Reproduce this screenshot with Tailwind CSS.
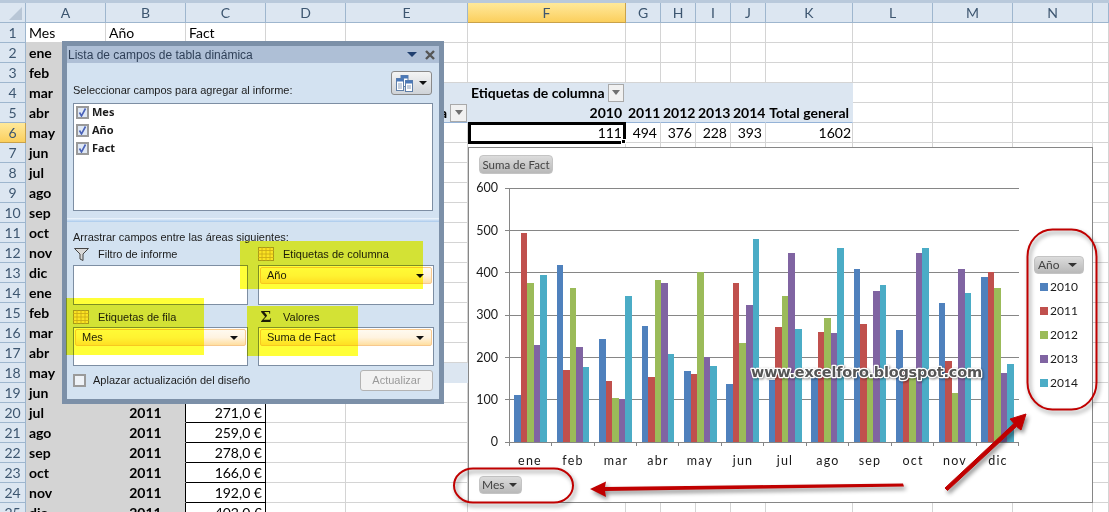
<!DOCTYPE html>
<html>
<head>
<meta charset="utf-8">
<script src="https://cdn.jsdelivr.net/npm/@tailwindcss/browser@4"></script>
</head>
<body class="bg-white">
<div class="relative w-[1109px] h-[512px] overflow-hidden bg-white font-['Lato',sans-serif] text-[14px] text-black">

<!-- Sheet -->
<div class="pt-[3px] bg-[#b9c9db] grid grid-cols-[26px_80px_80px_80px_80px_122px_158px_35px_35px_35px_35px_87px_80px_80px_80px_16px] grid-rows-[20px] auto-rows-[20px] [&>div]:border-r [&>div]:border-b [&>div]:border-[#d4d4d4] [&>div]:bg-white [&>div]:px-[3px] [&>div]:leading-[19px] [&>div]:whitespace-nowrap">
  <!-- header -->
  <div class="bg-[#dce6f1]! border-[#9eb6ce]! relative"><svg class="absolute left-[9px] top-[4px]" width="13" height="13" viewBox="0 0 13 13"><path d="M13 0V13H0Z" fill="#b8c6d6"/></svg></div>
  <div class="bg-[#dce6f1]! border-[#9eb6ce]! text-center text-[#3d5670]">A</div>
  <div class="bg-[#dce6f1]! border-[#9eb6ce]! text-center text-[#3d5670]">B</div>
  <div class="bg-[#dce6f1]! border-[#9eb6ce]! text-center text-[#3d5670]">C</div>
  <div class="bg-[#dce6f1]! border-[#9eb6ce]! text-center text-[#3d5670]">D</div>
  <div class="bg-[#dce6f1]! border-[#9eb6ce]! text-center text-[#3d5670]">E</div>
  <div class="bg-linear-to-b! from-[#ffe99a] to-[#fbcf5c] border-[#c9a24a]! text-center text-[#3d5670]">F</div>
  <div class="bg-[#dce6f1]! border-[#9eb6ce]! text-center text-[#3d5670]">G</div>
  <div class="bg-[#dce6f1]! border-[#9eb6ce]! text-center text-[#3d5670]">H</div>
  <div class="bg-[#dce6f1]! border-[#9eb6ce]! text-center text-[#3d5670]">I</div>
  <div class="bg-[#dce6f1]! border-[#9eb6ce]! text-center text-[#3d5670]">J</div>
  <div class="bg-[#dce6f1]! border-[#9eb6ce]! text-center text-[#3d5670]">K</div>
  <div class="bg-[#dce6f1]! border-[#9eb6ce]! text-center text-[#3d5670]">L</div>
  <div class="bg-[#dce6f1]! border-[#9eb6ce]! text-center text-[#3d5670]">M</div>
  <div class="bg-[#dce6f1]! border-[#9eb6ce]! text-center text-[#3d5670]">N</div>
  <div class="bg-[#dce6f1]! border-[#9eb6ce]!"></div>
  <!-- 1 -->
  <div class="bg-[#dce6f1]! border-[#9eb6ce]! text-center text-[#3d5670]">1</div><div>Mes</div><div>Año</div><div>Fact</div><div></div><div></div><div></div><div></div><div></div><div></div><div></div><div></div><div></div><div></div><div></div><div></div>
  <!-- 2 -->
  <div class="bg-[#dce6f1]! border-[#9eb6ce]! text-center text-[#3d5670]">2</div><div class="bg-[#d4d4d4]! border-[#d4d4d4]! font-bold">ene</div><div class="bg-[#d4d4d4]! border-[#d4d4d4]!"></div><div></div><div></div><div></div><div></div><div></div><div></div><div></div><div></div><div></div><div></div><div></div><div></div><div></div>
  <!-- 3 -->
  <div class="bg-[#dce6f1]! border-[#9eb6ce]! text-center text-[#3d5670]">3</div><div class="bg-[#d4d4d4]! border-[#d4d4d4]! font-bold">feb</div><div class="bg-[#d4d4d4]! border-[#d4d4d4]!"></div><div></div><div></div><div></div><div></div><div></div><div></div><div></div><div></div><div></div><div></div><div></div><div></div><div></div>
  <!-- 4 -->
  <div class="bg-[#dce6f1]! border-[#9eb6ce]! text-center text-[#3d5670]">4</div><div class="bg-[#d4d4d4]! border-[#d4d4d4]! font-bold">mar</div><div class="bg-[#d4d4d4]! border-[#d4d4d4]!"></div><div></div><div></div><div class="bg-[#dce6f1]! border-[#dce6f1]!"></div>
  <div class="bg-[#dce6f1]! border-[#dce6f1]! font-bold flex justify-between items-center pr-[1px]!"><span>Etiquetas de columna</span><span class="w-[16px] h-[18px] border border-[#a9a9a9] bg-[#f1f1f1] flex items-center justify-center"><svg width="8" height="5" viewBox="0 0 8 5"><path d="M0 0H8L4 5Z" fill="#707070"/></svg></span></div>
  <div class="bg-[#dce6f1]! border-[#dce6f1]!"></div><div class="bg-[#dce6f1]! border-[#dce6f1]!"></div><div class="bg-[#dce6f1]! border-[#dce6f1]!"></div><div class="bg-[#dce6f1]! border-[#dce6f1]!"></div><div class="bg-[#dce6f1]! border-[#dce6f1]!"></div><div></div><div></div><div></div><div></div>
  <!-- 5 -->
  <div class="bg-[#dce6f1]! border-[#9eb6ce]! text-center text-[#3d5670]">5</div><div class="bg-[#d4d4d4]! border-[#d4d4d4]! font-bold">abr</div><div class="bg-[#d4d4d4]! border-[#d4d4d4]!"></div><div></div><div></div>
  <div class="bg-[#dce6f1]! border-[#dce6f1]! border-b-[#95b3d7]! font-bold flex justify-end items-center gap-[3px] pr-0! overflow-hidden"><span>Etiquetas de fila</span><span class="shrink-0 w-[17px] h-[18px] border border-[#a9a9a9] bg-[#f1f1f1] flex items-center justify-center"><svg width="8" height="5" viewBox="0 0 8 5"><path d="M0 0H8L4 5Z" fill="#707070"/></svg></span></div>
  <div class="bg-[#dce6f1]! border-[#dce6f1]! border-b-[#95b3d7]! font-bold text-right">2010</div><div class="bg-[#dce6f1]! border-[#dce6f1]! border-b-[#95b3d7]! font-bold text-right px-[2px]!">2011</div><div class="bg-[#dce6f1]! border-[#dce6f1]! border-b-[#95b3d7]! font-bold text-right px-[2px]!">2012</div><div class="bg-[#dce6f1]! border-[#dce6f1]! border-b-[#95b3d7]! font-bold text-right px-[2px]!">2013</div><div class="bg-[#dce6f1]! border-[#dce6f1]! border-b-[#95b3d7]! font-bold text-right px-[2px]!">2014</div><div class="bg-[#dce6f1]! border-[#dce6f1]! border-b-[#95b3d7]! font-bold text-right">Total general</div><div></div><div></div><div></div><div></div>
  <!-- 6 -->
  <div class="bg-linear-to-b! from-[#ffe99a] to-[#fbcf5c] border-[#c9a24a]! text-center text-[#3d5670]">6</div><div class="bg-[#d4d4d4]! border-[#d4d4d4]! font-bold">may</div><div class="bg-[#d4d4d4]! border-[#d4d4d4]!"></div><div></div><div></div><div></div>
  <div class="relative -mt-[1px] -mb-[1px] border-[3px]! border-black! text-right leading-[16px]! pl-0! pr-[1px]!">111<span class="absolute -right-[3px] -bottom-[3px] w-[5px] h-[5px] bg-black border border-white"></span></div>
  <div class="text-right">494</div><div class="text-right">376</div><div class="text-right">228</div><div class="text-right">393</div><div class="text-right px-[1px]!">1602</div><div></div><div></div><div></div><div></div>
  <!-- 7 -->
  <div class="bg-[#dce6f1]! border-[#9eb6ce]! text-center text-[#3d5670]">7</div><div class="bg-[#d4d4d4]! border-[#d4d4d4]! font-bold">jun</div><div class="bg-[#d4d4d4]! border-[#d4d4d4]!"></div><div></div><div></div><div></div><div></div><div></div><div></div><div></div><div></div><div></div><div></div><div></div><div></div><div></div>
  <!-- 8 -->
  <div class="bg-[#dce6f1]! border-[#9eb6ce]! text-center text-[#3d5670]">8</div><div class="bg-[#d4d4d4]! border-[#d4d4d4]! font-bold">jul</div><div class="bg-[#d4d4d4]! border-[#d4d4d4]!"></div><div></div><div></div><div></div><div></div><div></div><div></div><div></div><div></div><div></div><div></div><div></div><div></div><div></div>
  <!-- 9 -->
  <div class="bg-[#dce6f1]! border-[#9eb6ce]! text-center text-[#3d5670]">9</div><div class="bg-[#d4d4d4]! border-[#d4d4d4]! font-bold">ago</div><div class="bg-[#d4d4d4]! border-[#d4d4d4]!"></div><div></div><div></div><div></div><div></div><div></div><div></div><div></div><div></div><div></div><div></div><div></div><div></div><div></div>
  <!-- 10 -->
  <div class="bg-[#dce6f1]! border-[#9eb6ce]! text-center text-[#3d5670]">10</div><div class="bg-[#d4d4d4]! border-[#d4d4d4]! font-bold">sep</div><div class="bg-[#d4d4d4]! border-[#d4d4d4]!"></div><div></div><div></div><div></div><div></div><div></div><div></div><div></div><div></div><div></div><div></div><div></div><div></div><div></div>
  <!-- 11 -->
  <div class="bg-[#dce6f1]! border-[#9eb6ce]! text-center text-[#3d5670]">11</div><div class="bg-[#d4d4d4]! border-[#d4d4d4]! font-bold">oct</div><div class="bg-[#d4d4d4]! border-[#d4d4d4]!"></div><div></div><div></div><div></div><div></div><div></div><div></div><div></div><div></div><div></div><div></div><div></div><div></div><div></div>
  <!-- 12 -->
  <div class="bg-[#dce6f1]! border-[#9eb6ce]! text-center text-[#3d5670]">12</div><div class="bg-[#d4d4d4]! border-[#d4d4d4]! font-bold">nov</div><div class="bg-[#d4d4d4]! border-[#d4d4d4]!"></div><div></div><div></div><div></div><div></div><div></div><div></div><div></div><div></div><div></div><div></div><div></div><div></div><div></div>
  <!-- 13 -->
  <div class="bg-[#dce6f1]! border-[#9eb6ce]! text-center text-[#3d5670]">13</div><div class="bg-[#d4d4d4]! border-[#d4d4d4]! font-bold">dic</div><div class="bg-[#d4d4d4]! border-[#d4d4d4]!"></div><div></div><div></div><div></div><div></div><div></div><div></div><div></div><div></div><div></div><div></div><div></div><div></div><div></div>
  <!-- 14 -->
  <div class="bg-[#dce6f1]! border-[#9eb6ce]! text-center text-[#3d5670]">14</div><div class="bg-[#d4d4d4]! border-[#d4d4d4]! font-bold">ene</div><div class="bg-[#d4d4d4]! border-[#d4d4d4]!"></div><div></div><div></div><div></div><div></div><div></div><div></div><div></div><div></div><div></div><div></div><div></div><div></div><div></div>
  <!-- 15 -->
  <div class="bg-[#dce6f1]! border-[#9eb6ce]! text-center text-[#3d5670]">15</div><div class="bg-[#d4d4d4]! border-[#d4d4d4]! font-bold">feb</div><div class="bg-[#d4d4d4]! border-[#d4d4d4]!"></div><div></div><div></div><div></div><div></div><div></div><div></div><div></div><div></div><div></div><div></div><div></div><div></div><div></div>
  <!-- 16 -->
  <div class="bg-[#dce6f1]! border-[#9eb6ce]! text-center text-[#3d5670]">16</div><div class="bg-[#d4d4d4]! border-[#d4d4d4]! font-bold">mar</div><div class="bg-[#d4d4d4]! border-[#d4d4d4]!"></div><div></div><div></div><div></div><div></div><div></div><div></div><div></div><div></div><div></div><div></div><div></div><div></div><div></div>
  <!-- 17 -->
  <div class="bg-[#dce6f1]! border-[#9eb6ce]! text-center text-[#3d5670]">17</div><div class="bg-[#d4d4d4]! border-[#d4d4d4]! font-bold">abr</div><div class="bg-[#d4d4d4]! border-[#d4d4d4]!"></div><div></div><div></div><div></div><div></div><div></div><div></div><div></div><div></div><div></div><div></div><div></div><div></div><div></div>
  <!-- 18 -->
  <div class="bg-[#dce6f1]! border-[#9eb6ce]! text-center text-[#3d5670]">18</div><div class="bg-[#d4d4d4]! border-[#d4d4d4]! font-bold">may</div><div class="bg-[#d4d4d4]! border-[#d4d4d4]!"></div><div></div><div></div><div class="bg-[#dce6f1]! border-[#dce6f1]!"></div><div></div><div></div><div></div><div></div><div></div><div></div><div></div><div></div><div></div><div></div>
  <!-- 19 -->
  <div class="bg-[#dce6f1]! border-[#9eb6ce]! text-center text-[#3d5670]">19</div><div class="bg-[#d4d4d4]! border-[#d4d4d4]! font-bold">jun</div><div class="bg-[#d4d4d4]! border-[#d4d4d4]!"></div><div></div><div></div><div></div><div></div><div></div><div></div><div></div><div></div><div></div><div></div><div></div><div></div><div></div>
  <!-- 20 -->
  <div class="bg-[#dce6f1]! border-[#9eb6ce]! text-center text-[#3d5670]">20</div><div class="bg-[#d4d4d4]! border-[#d4d4d4]! font-bold">jul</div><div class="bg-[#d4d4d4]! border-[#d4d4d4]! border-r-black! font-bold text-center">2011</div><div class="border-black! text-right">271,0 €</div><div></div><div></div><div></div><div></div><div></div><div></div><div></div><div></div><div></div><div></div><div></div><div></div>
  <!-- 21 -->
  <div class="bg-[#dce6f1]! border-[#9eb6ce]! text-center text-[#3d5670]">21</div><div class="bg-[#d4d4d4]! border-[#d4d4d4]! font-bold">ago</div><div class="bg-[#d4d4d4]! border-[#d4d4d4]! border-r-black! font-bold text-center">2011</div><div class="border-black! text-right">259,0 €</div><div></div><div></div><div></div><div></div><div></div><div></div><div></div><div></div><div></div><div></div><div></div><div></div>
  <!-- 22 -->
  <div class="bg-[#dce6f1]! border-[#9eb6ce]! text-center text-[#3d5670]">22</div><div class="bg-[#d4d4d4]! border-[#d4d4d4]! font-bold">sep</div><div class="bg-[#d4d4d4]! border-[#d4d4d4]! border-r-black! font-bold text-center">2011</div><div class="border-black! text-right">278,0 €</div><div></div><div></div><div></div><div></div><div></div><div></div><div></div><div></div><div></div><div></div><div></div><div></div>
  <!-- 23 -->
  <div class="bg-[#dce6f1]! border-[#9eb6ce]! text-center text-[#3d5670]">23</div><div class="bg-[#d4d4d4]! border-[#d4d4d4]! font-bold">oct</div><div class="bg-[#d4d4d4]! border-[#d4d4d4]! border-r-black! font-bold text-center">2011</div><div class="border-black! text-right">166,0 €</div><div></div><div></div><div></div><div></div><div></div><div></div><div></div><div></div><div></div><div></div><div></div><div></div>
  <!-- 24 -->
  <div class="bg-[#dce6f1]! border-[#9eb6ce]! text-center text-[#3d5670]">24</div><div class="bg-[#d4d4d4]! border-[#d4d4d4]! font-bold">nov</div><div class="bg-[#d4d4d4]! border-[#d4d4d4]! border-r-black! font-bold text-center">2011</div><div class="border-black! text-right">192,0 €</div><div></div><div></div><div></div><div></div><div></div><div></div><div></div><div></div><div></div><div></div><div></div><div></div>
  <!-- 25 -->
  <div class="bg-[#dce6f1]! border-[#9eb6ce]! text-center text-[#3d5670]">25</div><div class="bg-[#d4d4d4]! border-[#d4d4d4]! font-bold">dic</div><div class="bg-[#d4d4d4]! border-[#d4d4d4]! border-r-black! font-bold text-center">2011</div><div class="border-black! text-right">402,0 €</div><div></div><div></div><div></div><div></div><div></div><div></div><div></div><div></div><div></div><div></div><div></div><div></div>
</div>

<!-- Pivot field list panel -->
<div class="absolute left-[62px] top-[41px] w-[382px] h-[363px] border-[5px] border-[#7c90a8] bg-[#d3e2f1] flex flex-col font-['Liberation_Sans',sans-serif] text-[11px] text-[#1c1c1c]">
  <div class="h-[17px] shrink-0 bg-[#aebfd6] flex items-center justify-between pl-[1px] pr-[4px] text-[#2f4058] text-[12px]">
    <span>Lista de campos de tabla dinámica</span>
    <span class="flex items-center gap-[8px]">
      <svg width="10" height="5" viewBox="0 0 10 5"><path d="M0 0H10L5 5Z" fill="#1f3f6f"/></svg>
      <svg width="10" height="10" viewBox="0 0 10 10"><path d="M1 1L9 9M9 1L1 9" stroke="#555" stroke-width="2.4"/></svg>
    </span>
  </div>
  <div class="flex-1 px-[6px] flex flex-col">
    <div class="h-[40px] shrink-0 flex justify-between">
      <span class="mt-[19px] leading-[16px]">Seleccionar campos para agregar al informe:</span>
      <div class="mt-[8px] mr-[1px] w-[41px] h-[24px] rounded-[3px] border border-[#8a8a8a] bg-linear-to-b from-[#f4f4f4] to-[#cfd3d8] flex items-center justify-center gap-[6px]">
        <svg width="17" height="17" viewBox="0 0 17 17"><rect x="5" y="0.5" width="7" height="11" fill="#fff" stroke="#5f7fa8"/><rect x="5" y="0.5" width="7" height="3" fill="#4a78b8"/><rect x="0.5" y="3.5" width="7" height="12" fill="#fff" stroke="#5f7fa8"/><rect x="0.5" y="3.5" width="7" height="3" fill="#4a78b8"/><rect x="9.5" y="5.5" width="7" height="11" fill="#fff" stroke="#5f7fa8"/><rect x="9.5" y="5.5" width="7" height="3" fill="#4a78b8"/><path d="M2 9H6M2 11H6M2 13H6M11 11H15M11 13H15" stroke="#8aa0bd"/></svg>
        <svg width="8" height="4" viewBox="0 0 8 4"><path d="M0 0H8L4 4Z" fill="#111"/></svg>
      </div>
    </div>
    <div class="h-[108px] shrink-0 bg-white border border-[#7d8ea3] pl-[2px] pt-[2px] flex flex-col gap-[5px] font-bold font-['Noto_Sans',sans-serif]">
      <label class="flex items-center gap-[2px] h-[13px]"><span class="w-[13px] h-[13px] border-2 border-[#9a9a9a] bg-[#dfe8f5] flex items-center justify-center"><svg width="9" height="9" viewBox="0 0 9 9"><path d="M1.5 4.5L3.5 8L7.5 0.5" fill="none" stroke="#4a62b8" stroke-width="1.6"/></svg></span><span class="ml-[1px]">Mes</span></label>
      <label class="flex items-center gap-[2px] h-[13px]"><span class="w-[13px] h-[13px] border-2 border-[#9a9a9a] bg-[#dfe8f5] flex items-center justify-center"><svg width="9" height="9" viewBox="0 0 9 9"><path d="M1.5 4.5L3.5 8L7.5 0.5" fill="none" stroke="#4a62b8" stroke-width="1.6"/></svg></span><span class="ml-[1px]">Año</span></label>
      <label class="flex items-center gap-[2px] h-[13px]"><span class="w-[13px] h-[13px] border-2 border-[#9a9a9a] bg-[#dfe8f5] flex items-center justify-center"><svg width="9" height="9" viewBox="0 0 9 9"><path d="M1.5 4.5L3.5 8L7.5 0.5" fill="none" stroke="#4a62b8" stroke-width="1.6"/></svg></span><span class="ml-[1px]">Fact</span></label>
    </div>
    <div class="-mx-[6px] mt-[7px] h-[4px] shrink-0 bg-linear-to-b from-[#f2f7fc] to-[#a9c9ec]"></div>
    <div class="mt-[8px] h-[14px] leading-[14px] shrink-0">Arrastrar campos entre las áreas siguientes:</div>
    <div class="mt-[3px] grid grid-cols-[175px_176px] gap-x-[10px] gap-y-[4px]">
      <div>
        <div class="h-[18px] pb-[4px] flex items-center"><svg class="ml-[1px]" width="15" height="13" viewBox="0 0 15 13"><path d="M0.5 0.5H14.5L9 6V12.5L6 11V6Z" fill="#d8d8d8" stroke="#444"/></svg><span class="ml-[9px]">Filtro de informe</span></div>
        <div class="h-[40px] bg-white border border-[#7d8ea3]"></div>
      </div>
      <div>
        <div class="h-[18px] pb-[4px] flex items-center"><svg width="16" height="14" viewBox="0 0 16 14"><rect x="0.5" y="0.5" width="15" height="13" fill="#fbe39a" stroke="#a89a6a"/><path d="M4 0V14M8 0V14M12 0V14M0 3.5H16M0 7H16M0 10.5H16" stroke="#c9a85a" stroke-width="0.8"/></svg><span class="ml-[9px]">Etiquetas de columna</span></div>
        <div class="h-[40px] bg-white border border-[#7d8ea3] p-[1px]">
          <div class="h-[17px] rounded-[2px] border border-[#f7c88e] bg-linear-to-b from-[#fffaf0] via-[#fff3e0] to-[#ffdf9f] flex items-center justify-between pl-[6px] pr-[7px]"><span>Año</span><svg width="8" height="4" viewBox="0 0 8 4"><path d="M0 0H8L4 4Z" fill="#111"/></svg></div>
        </div>
      </div>
      <div>
        <div class="h-[18px] pb-[2px] flex items-center"><svg width="16" height="14" viewBox="0 0 16 14"><rect x="0.5" y="0.5" width="15" height="13" fill="#fbe39a" stroke="#a89a6a"/><path d="M4 0V14M8 0V14M12 0V14M0 3.5H16M0 7H16M0 10.5H16" stroke="#c9a85a" stroke-width="0.8"/></svg><span class="ml-[9px]">Etiquetas de fila</span></div>
        <div class="h-[39px] bg-white border border-[#7d8ea3] p-[1px]">
          <div class="h-[17px] rounded-[2px] border border-[#f7c88e] bg-linear-to-b from-[#fffaf0] via-[#fff3e0] to-[#ffdf9f] flex items-center justify-between pl-[6px] pr-[7px]"><span>Mes</span><svg width="8" height="4" viewBox="0 0 8 4"><path d="M0 0H8L4 4Z" fill="#111"/></svg></div>
        </div>
      </div>
      <div>
        <div class="h-[18px] pb-[2px] flex items-center"><span class="w-[16px] text-center font-['Liberation_Serif',serif] font-bold text-[17px] leading-[14px]">Σ</span><span class="ml-[9px]">Valores</span></div>
        <div class="h-[39px] bg-white border border-[#7d8ea3] p-[1px]">
          <div class="h-[17px] rounded-[2px] border border-[#f7c88e] bg-linear-to-b from-[#fffaf0] via-[#fff3e0] to-[#ffdf9f] flex items-center justify-between pl-[6px] pr-[7px]"><span>Suma de Fact</span><svg width="8" height="4" viewBox="0 0 8 4"><path d="M0 0H8L4 4Z" fill="#111"/></svg></div>
        </div>
      </div>
    </div>
    <div class="mt-[4px] h-[21px] shrink-0 flex items-center justify-between">
      <div class="flex items-center gap-[7px]"><span class="w-[13px] h-[13px] border-2 border-[#9a9a9a] bg-[#eef2f7]"></span><span>Aplazar actualización del diseño</span></div>
      <div class="w-[73px] h-[21px] rounded-[3px] border border-[#b3b3b3] bg-[#f2f2f2] text-[#9a9a9a] flex items-center justify-center">Actualizar</div>
    </div>
  </div>
</div>

<!-- yellow highlighter strokes -->
<div class="absolute left-[240px] top-[241px] w-[183px] h-[48px] bg-[#ffff38] mix-blend-multiply"></div>
<div class="absolute left-[66px] top-[298px] w-[138px] h-[57px] bg-[#ffff38] mix-blend-multiply"></div>
<div class="absolute left-[247px] top-[306px] w-[111px] h-[50px] bg-[#ffff38] mix-blend-multiply"></div>

<!-- Pivot chart -->
<div class="absolute left-[468px] top-[147px] w-[625px] h-[356px] bg-white border border-[#868686] text-[#1a1a1a]">
  <svg class="absolute -left-[1px] -top-[1px]" width="625" height="356" viewBox="468 147 625 356">
    <g stroke="#868686" stroke-width="1" shape-rendering="crispEdges">
      <path d="M505 188H1019M505 230H1019M505 272H1019M505 315H1019M505 357H1019M505 399H1019M505 442H1019M509 188V442"/>
      <path d="M509 442V446M551.5 442V446M594 442V446M636.4 442V446M678.9 442V446M721.3 442V446M763.7 442V446M806.2 442V446M848.6 442V446M891 442V446M933.5 442V446M976 442V446M1018.5 442V446"/>
    </g>
    <g shape-rendering="crispEdges">
      <g transform="translate(514,442) scale(1,-.4238)"><rect x="0" width="7" height="111" fill="#4f81bd"/><rect x="7" width="6" height="494" fill="#c0504d"/><rect x="13" width="7" height="376" fill="#9bbb59"/><rect x="20" width="6" height="228" fill="#8064a2"/><rect x="26" width="7" height="393" fill="#4bacc6"/></g>
      <g transform="translate(557,442) scale(1,-.4238)"><rect x="0" width="6" height="418" fill="#4f81bd"/><rect x="6" width="7" height="170" fill="#c0504d"/><rect x="13" width="6" height="364" fill="#9bbb59"/><rect x="19" width="7" height="225" fill="#8064a2"/><rect x="26" width="6" height="178" fill="#4bacc6"/></g>
      <g transform="translate(599,442) scale(1,-.4238)"><rect x="0" width="7" height="244" fill="#4f81bd"/><rect x="7" width="6" height="144" fill="#c0504d"/><rect x="13" width="7" height="104" fill="#9bbb59"/><rect x="20" width="6" height="101" fill="#8064a2"/><rect x="26" width="7" height="345" fill="#4bacc6"/></g>
      <g transform="translate(642,442) scale(1,-.4238)"><rect x="0" width="6" height="274" fill="#4f81bd"/><rect x="6" width="7" height="154" fill="#c0504d"/><rect x="13" width="6" height="383" fill="#9bbb59"/><rect x="19" width="7" height="376" fill="#8064a2"/><rect x="26" width="6" height="208" fill="#4bacc6"/></g>
      <g transform="translate(684,442) scale(1,-.4238)"><rect x="0" width="7" height="168" fill="#4f81bd"/><rect x="7" width="6" height="161" fill="#c0504d"/><rect x="13" width="7" height="401" fill="#9bbb59"/><rect x="20" width="6" height="200" fill="#8064a2"/><rect x="26" width="7" height="180" fill="#4bacc6"/></g>
      <g transform="translate(726,442) scale(1,-.4238)"><rect x="0" width="7" height="137" fill="#4f81bd"/><rect x="7" width="6" height="376" fill="#c0504d"/><rect x="13" width="7" height="234" fill="#9bbb59"/><rect x="20" width="7" height="324" fill="#8064a2"/><rect x="27" width="6" height="480" fill="#4bacc6"/></g>
      <g transform="translate(769,442) scale(1,-.4238)"><rect x="0" width="6" height="147" fill="#4f81bd"/><rect x="6" width="7" height="271" fill="#c0504d"/><rect x="13" width="6" height="345" fill="#9bbb59"/><rect x="19" width="7" height="446" fill="#8064a2"/><rect x="26" width="7" height="267" fill="#4bacc6"/></g>
      <g transform="translate(811,442) scale(1,-.4238)"><rect x="0" width="7" height="155" fill="#4f81bd"/><rect x="7" width="6" height="259" fill="#c0504d"/><rect x="13" width="7" height="293" fill="#9bbb59"/><rect x="20" width="6" height="257" fill="#8064a2"/><rect x="26" width="7" height="458" fill="#4bacc6"/></g>
      <g transform="translate(854,442) scale(1,-.4238)"><rect x="0" width="6" height="409" fill="#4f81bd"/><rect x="6" width="7" height="278" fill="#c0504d"/><rect x="13" width="6" height="160" fill="#9bbb59"/><rect x="19" width="7" height="356" fill="#8064a2"/><rect x="26" width="6" height="371" fill="#4bacc6"/></g>
      <g transform="translate(896,442) scale(1,-.4238)"><rect x="0" width="7" height="265" fill="#4f81bd"/><rect x="7" width="6" height="166" fill="#c0504d"/><rect x="13" width="7" height="160" fill="#9bbb59"/><rect x="20" width="6" height="447" fill="#8064a2"/><rect x="26" width="7" height="458" fill="#4bacc6"/></g>
      <g transform="translate(939,442) scale(1,-.4238)"><rect x="0" width="6" height="329" fill="#4f81bd"/><rect x="6" width="7" height="192" fill="#c0504d"/><rect x="13" width="6" height="116" fill="#9bbb59"/><rect x="19" width="7" height="409" fill="#8064a2"/><rect x="26" width="6" height="351" fill="#4bacc6"/></g>
      <g transform="translate(981,442) scale(1,-.4238)"><rect x="0" width="7" height="390" fill="#4f81bd"/><rect x="7" width="6" height="402" fill="#c0504d"/><rect x="13" width="7" height="364" fill="#9bbb59"/><rect x="20" width="6" height="162" fill="#8064a2"/><rect x="26" width="7" height="183" fill="#4bacc6"/></g>
    </g>
    <g font-family="Lato" font-size="12.5" fill="#1a1a1a" text-anchor="end">
      <text x="498" y="192">600</text><text x="498" y="235">500</text><text x="498" y="277">400</text><text x="498" y="319">300</text><text x="498" y="362">200</text><text x="498" y="404">100</text><text x="498" y="446">0</text>
    </g>
    <g font-family="Lato" font-size="12.5" fill="#1a1a1a" text-anchor="middle" letter-spacing="1.2">
      <text x="530" y="465">ene</text><text x="573" y="465">feb</text><text x="616" y="465">mar</text><text x="658" y="465">abr</text><text x="700" y="465">may</text><text x="743" y="465">jun</text><text x="785" y="465">jul</text><text x="828" y="465">ago</text><text x="870" y="465">sep</text><text x="913" y="465">oct</text><text x="955" y="465">nov</text><text x="998" y="465">dic</text>
    </g>
    <text class="drop-shadow-[1px_1px_1px_rgba(0,0,0,0.45)]" x="751" y="377" textLength="231" lengthAdjust="spacing" font-family="DejaVu Sans" font-weight="bold" font-size="14.5" fill="#555" stroke="#fff" stroke-width="2.6" paint-order="stroke" stroke-linejoin="round">www.excelforo.blogspot.com</text>
  </svg>

  <div class="absolute left-[10px] top-[7px] w-[74px] h-[19px] rounded-[4px] border border-[#c4c4c4] bg-linear-to-b from-[#dcdcdc] to-[#b9b9b9] text-[11.5px] text-[#444] flex items-center justify-center">Suma de Fact</div>
  <div class="absolute left-[10px] top-[328px] w-[43px] h-[18px] rounded-[4px] border border-[#c4c4c4] bg-linear-to-b from-[#dcdcdc] to-[#b9b9b9] text-[12px] text-[#444] flex items-center justify-between pl-[2px] pr-[4px]"><span>Mes</span><svg width="8" height="4" viewBox="0 0 8 4"><path d="M0 0H8L4 4Z" fill="#333"/></svg></div>
  <div class="absolute left-[565px] top-[108px] w-[50px] flex flex-col items-start text-[12px]">
    <div class="w-[50px] h-[18px] rounded-[4px] border border-[#c4c4c4] bg-linear-to-b from-[#dcdcdc] to-[#b9b9b9] text-[12px] text-[#444] flex items-center justify-between pl-[3px] pr-[6px]"><span>Año</span><svg width="9" height="4" viewBox="0 0 9 4"><path d="M0 0H9L4.5 4Z" fill="#333"/></svg></div>
    <div class="mt-[1px] flex flex-col">
      <div class="h-[24px] flex items-center gap-[2px] pl-[6px]"><span class="w-[8px] h-[8px] bg-[#4f81bd]"></span>2010</div>
      <div class="h-[24px] flex items-center gap-[2px] pl-[6px]"><span class="w-[8px] h-[8px] bg-[#c0504d]"></span>2011</div>
      <div class="h-[24px] flex items-center gap-[2px] pl-[6px]"><span class="w-[8px] h-[8px] bg-[#9bbb59]"></span>2012</div>
      <div class="h-[24px] flex items-center gap-[2px] pl-[6px]"><span class="w-[8px] h-[8px] bg-[#8064a2]"></span>2013</div>
      <div class="h-[24px] flex items-center gap-[2px] pl-[6px]"><span class="w-[8px] h-[8px] bg-[#4bacc6]"></span>2014</div>
    </div>
  </div>
</div>

<!-- Red annotations -->
<svg class="absolute left-0 top-0 pointer-events-none drop-shadow-[2px_3px_2px_rgba(0,0,0,0.45)]" width="1109" height="512" viewBox="0 0 1109 512">
  <rect x="1027.5" y="229.5" width="69" height="180" rx="25" ry="27" fill="none" stroke="#c00000" stroke-width="2"/>
  <rect x="454" y="468.5" width="119" height="34" rx="19" ry="17" fill="none" stroke="#c00000" stroke-width="2"/>
  <path d="M903 483.5L904 486.5L605 491L606 497L590 489L606 481.5L605 487Z" fill="#c00000"/>
  <path d="M945 488L1014 423.5L1010 419L1026 414L1021 430L1016.5 426.5L947.5 490.5Z" fill="#c00000" stroke="#c00000" stroke-width="1"/>
</svg>

</div>
</body>
</html>
